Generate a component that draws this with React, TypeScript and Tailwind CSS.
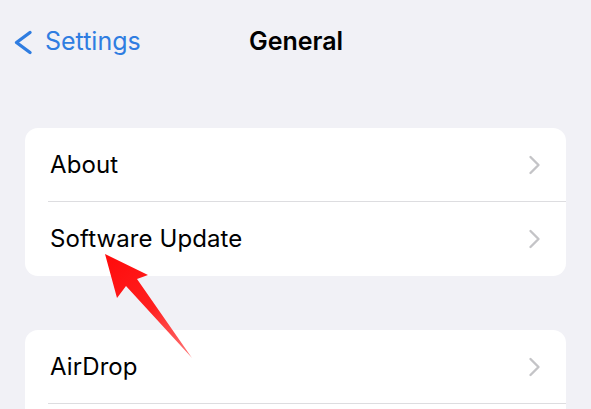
import React from "react";

function Chevron() {
  return (
    <svg width="14" height="20" viewBox="0 0 14 20" fill="none" className="shrink-0">
      <polyline points="2.5,2 10.5,10 2.5,18" stroke="#c4c4c7" strokeWidth="2.4" strokeLinecap="round" strokeLinejoin="round" />
    </svg>
  );
}

function Row({ label, divider }: { label?: string; divider?: boolean }) {
  return (
    <div className="relative flex h-[74px] items-center pl-[25px] pr-[24px]">
      <span className="flex-1 text-[24px] text-black tracking-[0.1px]">{label}</span>
      {label && <Chevron />}
      {divider && <div className="absolute bottom-0 left-[23px] right-0 h-px bg-[#dddde0]" />}
    </div>
  );
}

export default function App() {
  return (
    <div
      className="relative h-[409px] w-[591px] overflow-hidden bg-[#f1f1f6]"
      style={{ fontFamily: "Inter, 'Liberation Sans', sans-serif" }}
    >
      <div className="relative flex h-[84px] items-center">
        <div className="flex items-center pl-[13px]">
          <svg width="20" height="25" viewBox="0 0 20 25" fill="none">
            <polyline points="17,2.5 3.5,12.5 17,22.5" stroke="#2f7de1" strokeWidth="3.4" strokeLinecap="round" strokeLinejoin="round" />
          </svg>
          <span className="ml-[12px] text-[25px] text-[#2f7de1]">Settings</span>
        </div>
        <div className="absolute inset-x-0 flex justify-center">
          <span className="ml-[1px] text-[25px] font-semibold text-black">General</span>
        </div>
      </div>
      <div className="mt-[44px] flex flex-col gap-[54px] px-[25px]">
        <div className="overflow-hidden rounded-[13px] bg-white">
          <Row label="About" divider />
          <Row label="Software Update" />
        </div>
        <div className="overflow-hidden rounded-[13px] bg-white">
          <Row label="AirDrop" divider />
          <Row />
        </div>
      </div>
      <svg className="pointer-events-none absolute left-0 top-0" width="591" height="409" viewBox="0 0 591 409">
        <defs>
          <linearGradient id="ag" x1="110" y1="260" x2="192" y2="358" gradientUnits="userSpaceOnUse">
            <stop offset="0" stopColor="#ff0d0d" />
            <stop offset="0.5" stopColor="#ff1f1f" />
            <stop offset="1" stopColor="#ff7a7a" />
          </linearGradient>
        </defs>
        <polygon points="105,254 148,275 137,279 192,358 126,286 117,298" fill="url(#ag)" />
      </svg>
    </div>
  );
}
